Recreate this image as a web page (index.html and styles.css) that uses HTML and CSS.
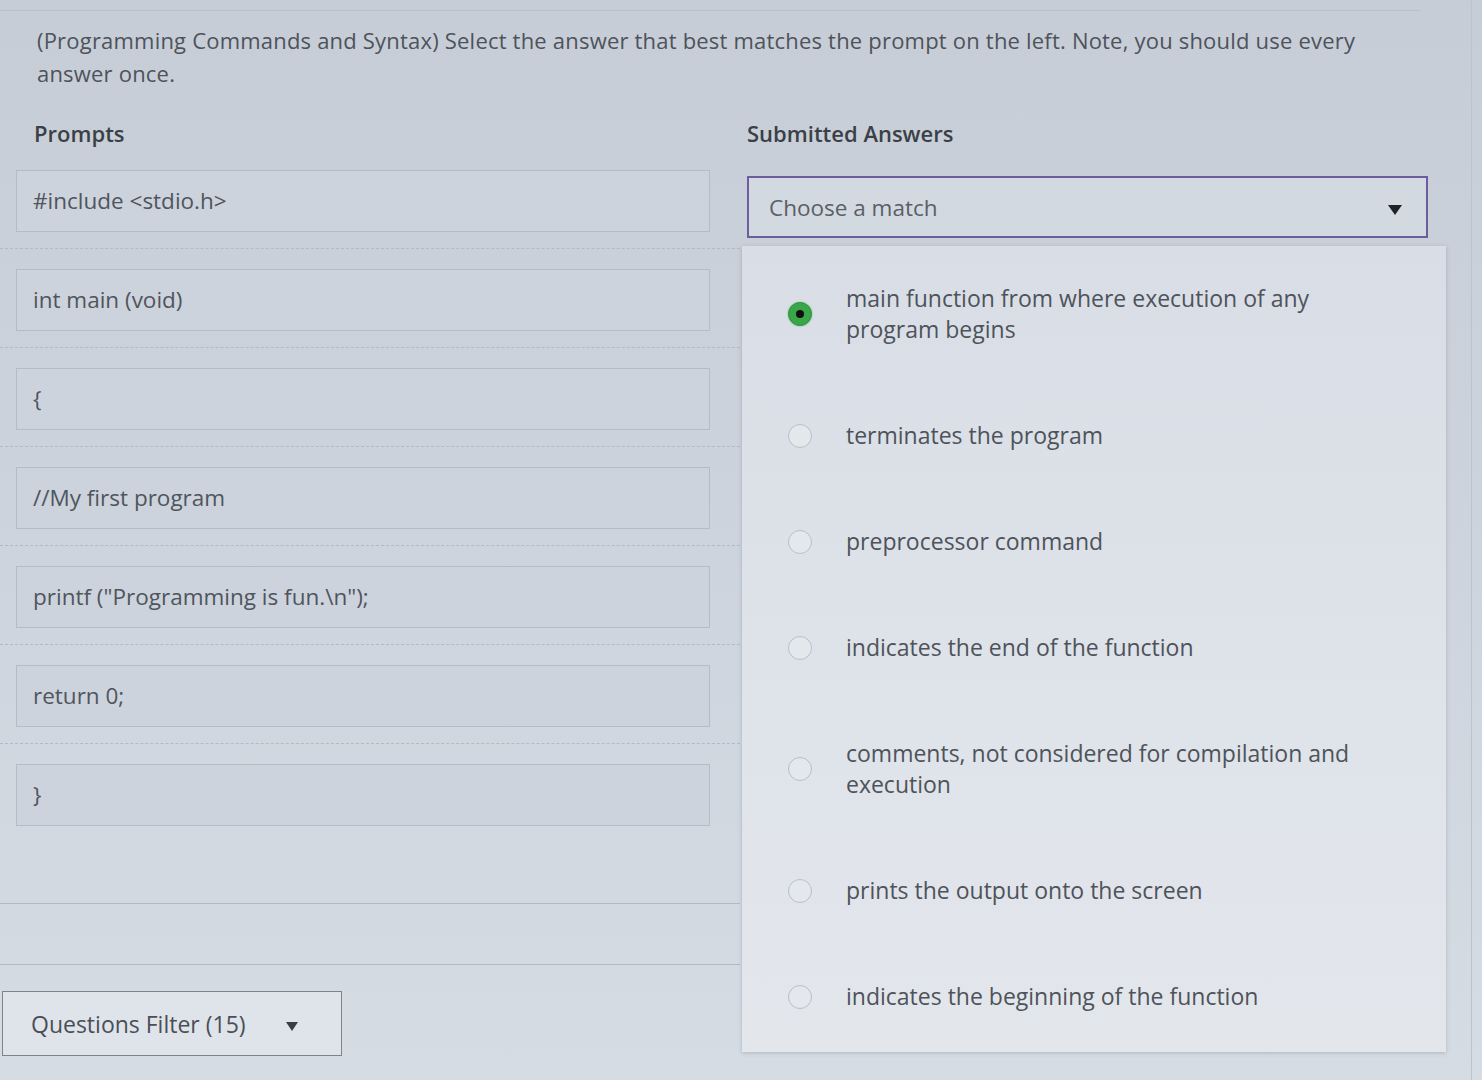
FILE: index.html
```html
<!DOCTYPE html>
<html lang="en">
<head>
  <meta charset="UTF-8" />
  <meta name="viewport" content="width=device-width, initial-scale=1.0" />
  <title>Matching Question</title>
  <link rel="stylesheet" href="styles.css">
</head>
<body>
  <div class="page">
    <div class="top-rule"></div>

    <p class="question">(Programming Commands and Syntax) Select the answer that best matches the prompt on the left. Note, you should use every answer once.</p>

    <div class="columns">
      <!-- Prompts -->
      <div class="prompts">
        <h3 class="col-title prompts-title">Prompts</h3>
        <div class="prompt-list">
          <div class="prompt-row"><div class="prompt-box">#include &lt;stdio.h&gt;</div></div>
          <div class="prompt-row"><div class="prompt-box">int main (void)</div></div>
          <div class="prompt-row"><div class="prompt-box">{</div></div>
          <div class="prompt-row"><div class="prompt-box">//My first program</div></div>
          <div class="prompt-row"><div class="prompt-box">printf ("Programming is fun.\n");</div></div>
          <div class="prompt-row"><div class="prompt-box">return 0;</div></div>
          <div class="prompt-row"><div class="prompt-box">}</div></div>
        </div>
        <div class="rule rule-first"></div>
        <div class="rule rule-second"></div>
        <div class="filter-box">
          <span>Questions Filter (15)</span>
          <span class="caret small"></span>
        </div>
      </div>

      <!-- Answers -->
      <div class="answers">
        <h3 class="col-title answers-title">Submitted Answers</h3>
        <div class="match-select">
          <span>Choose a match</span>
          <span class="caret"></span>
        </div>
        <ul class="options">
          <li class="option"><span class="radio checked"></span><span class="option-text">main function from where execution of any<br>program begins</span></li>
          <li class="option"><span class="radio"></span><span class="option-text">terminates the program</span></li>
          <li class="option"><span class="radio"></span><span class="option-text">preprocessor command</span></li>
          <li class="option"><span class="radio"></span><span class="option-text">indicates the end of the function</span></li>
          <li class="option"><span class="radio"></span><span class="option-text">comments, not considered for compilation and<br>execution</span></li>
          <li class="option"><span class="radio"></span><span class="option-text">prints the output onto the screen</span></li>
          <li class="option"><span class="radio"></span><span class="option-text">indicates the beginning of the function</span></li>
        </ul>
      </div>
    </div>
  </div>
</body>
</html>
```

FILE: styles.css
```css
body {
  margin: 0;
  padding: 0;
  font-family: "Open Sans", "Noto Sans", Arial, sans-serif;
  color: #50555c;
  background: linear-gradient(180deg, #c6cdd7 0%, #ccd3dc 45%, #d6dce4 100%);
  min-height: 1080px;
  overflow: hidden;
}

.page {
  width: 1471px;
  height: 1080px;
  border-right: 1px solid #bcc3cc;
}

.top-rule {
  width: 1420px;
  height: 10px;
  border-bottom: 1px solid #b9c0ca;
}

.question {
  margin: 13px 0 0 37px;
  width: 1370px;
  font-size: 22px;
  letter-spacing: 0.2px;
  line-height: 33px;
  color: #4e535a;
}

.columns {
  display: grid;
  grid-template-columns: 740px 704px;
  gap: 2px;
  margin-top: 28px;
}

.col-title {
  margin: 0;
  font-size: 22px;
  line-height: 30px;
  font-weight: 600;
  color: #3b3f46;
}

/* left column */
.prompts-title {
  padding-left: 34px;
  margin-bottom: 22px;
}

.prompt-row {
  padding: 0 30px 16px 16px;
  border-bottom: 1px dashed #b3bac4;
  margin-bottom: 20px;
}

.prompt-row:last-child {
  border-bottom: none;
  margin-bottom: 0;
  padding-bottom: 0;
}

.prompt-box {
  height: 60px;
  line-height: 60px;
  padding-left: 16px;
  font-size: 22.5px;
  color: #50555c;
  background: #ccd3dc;
  border: 1px solid #b5bcc6;
}

.rule {
  border-top: 1px solid #b3bac4;
}

.rule-first {
  margin-top: 77px;
}

.rule-second {
  margin-top: 60px;
}

.filter-box {
  display: flex;
  align-items: center;
  gap: 40px;
  width: 310px;
  height: 63px;
  margin: 26px 0 0 2px;
  padding-left: 28px;
  font-size: 23px;
  color: #4a4f56;
  background: #dfe4ea;
  border: 1px solid #7f848b;
}

/* right column */
.answers-title {
  padding-left: 5px;
  margin-bottom: 28px;
}

.match-select {
  display: flex;
  align-items: center;
  justify-content: space-between;
  height: 62px;
  margin-left: 5px;
  padding: 0 24px 0 20px;
  box-sizing: border-box;
  width: 681px;
  font-size: 22.5px;
  color: #5a5f66;
  background: #d3d9e1;
  border: 2px solid #6d5c9e;
}

.caret {
  width: 0;
  height: 0;
  border-left: 7px solid transparent;
  border-right: 7px solid transparent;
  border-top: 10px solid #1f2226;
  margin-top: 6px;
}

.caret.small {
  border-left-width: 6px;
  border-right-width: 6px;
  border-top: 9px solid #3a3d42;
}

.options {
  list-style: none;
  margin: 8px 0 0;
  padding: 0;
  background: linear-gradient(180deg, #d9dee6 0%, #dfe3ea 60%, #e3e7ec 100%);
  box-shadow: 0 1px 4px rgba(60, 70, 90, 0.25);
}

.option {
  display: flex;
  align-items: center;
  gap: 34px;
  padding: 37px 0 38px 46px;
}

.option:last-child {
  padding-bottom: 40px;
}

.option-text {
  font-size: 23px;
  line-height: 31px;
  color: #4e535a;
}

.radio {
  flex: none;
  width: 22px;
  height: 22px;
  border-radius: 50%;
  border: 1px solid #b9bfc8;
  background: #e4e8ed;
}

.radio.checked {
  position: relative;
  background: #3aa549;
  border-color: #2f9440;
  box-shadow: 0 0 2px rgba(58, 165, 73, 0.6);
}

.radio.checked::after {
  content: "";
  position: absolute;
  left: 7px;
  top: 7px;
  width: 8px;
  height: 8px;
  border-radius: 50%;
  background: #111;
}
```
